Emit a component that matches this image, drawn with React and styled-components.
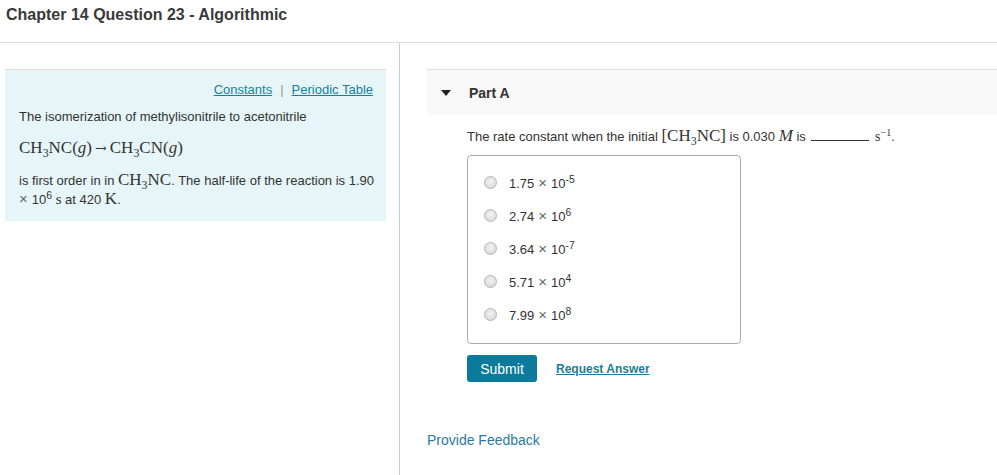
import React from "react";
import styled, { createGlobalStyle } from "styled-components";

const Global = createGlobalStyle`
  html, body { margin: 0; padding: 0; background: #fff; }
  body { font-family: "Liberation Sans", Arial, sans-serif; color: #333; }
`;

const Page = styled.div`
  width: 997px;
  height: 475px;
  display: flex;
  flex-direction: column;
  overflow: hidden;
`;

const Header = styled.header`
  height: 43px;
  flex: none;
  border-bottom: 1px solid #dcdcdc;
  padding: 6px 0 0 6px;
  box-sizing: border-box;
`;

const Title = styled.h1`
  margin: 0;
  font-size: 16px;
  line-height: 18px;
  font-weight: bold;
  color: #3a3a3a;
`;

const Main = styled.div`
  flex: 1;
  display: flex;
`;

const LeftCol = styled.div`
  width: 400px;
  box-sizing: border-box;
  border-right: 1px solid #bdd2e0;
  padding: 26px 13px 0 5px;
`;

const InfoPanel = styled.div`
  background: #e6f5f7;
  border-top: 1px solid #dcdcdc;
  padding: 12px 10px 12px 14px;
  height: 152px;
  box-sizing: border-box;
  font-size: 13px;
  color: #333;
`;

const Links = styled.div`
  display: flex;
  justify-content: flex-end;
  align-items: center;
  gap: 8px;
  line-height: 16px;
  margin-bottom: 10px;
  padding-right: 3px;
`;

const Link = styled.a`
  color: #147fa3;
  text-decoration: underline;
  font-size: ${(p) => p.$size || 13}px;
  font-weight: ${(p) => (p.$bold ? "bold" : "normal")};
  cursor: pointer;
`;

const Sep = styled.span`
  color: #999;
`;

const Para = styled.p`
  margin: 0;
  line-height: 18px;
`;

const Line = styled.span`
  white-space: nowrap;
`;

const Equation = styled.div`
  font-family: "Liberation Serif", "Times New Roman", serif;
  font-size: 17px;
  line-height: 20px;
  margin: 12px 0 13px;
  color: #333;
`;

const Arrow = styled.span`
  font-family: "DejaVu Serif", serif;
  margin: 0 3px;
  font-size: 14px;
`;

const M = styled.span`
  font-family: "Liberation Serif", "Times New Roman", serif;
  font-size: ${(p) => p.$size || 17}px;
  font-style: ${(p) => (p.$italic ? "italic" : "normal")};
`;

const Sub = styled.sub`
  font-size: 0.7em;
  vertical-align: -0.3em;
  line-height: 0;
`;

const Sup = styled.sup`
  font-size: ${(p) => p.$size || 0.72}em;
  vertical-align: 0.5em;
  line-height: 0;
`;

const RightCol = styled.div`
  flex: 1;
  padding: 26px 0 0 27px;
  display: flex;
  flex-direction: column;
`;

const PartHeader = styled.div`
  height: 46px;
  background: #f8f8f8;
  border-top: 1px solid #dcdcdc;
  box-sizing: border-box;
  display: flex;
  align-items: center;
  padding-left: 14px;
  gap: 18px;
`;

const Caret = styled.span`
  width: 0;
  height: 0;
  border-left: 5px solid transparent;
  border-right: 5px solid transparent;
  border-top: 6px solid #222;
  margin-top: 1px;
`;

const PartTitle = styled.span`
  font-weight: bold;
  font-size: 14px;
  color: #333;
`;

const PartBody = styled.div`
  padding-left: 40px;
`;

const Question = styled.p`
  margin: 11px 0 0;
  font-size: 13px;
  line-height: 19px;
  color: #333;
`;

const Blank = styled.span`
  display: inline-block;
  width: 58px;
  border-bottom: 1px solid #333;
  margin: 0 2px 0 2px;
  height: 13px;
  vertical-align: baseline;
`;

const Options = styled.div`
  margin-top: 9px;
  width: 274px;
  height: 189px;
  box-sizing: border-box;
  border: 1px solid #aaa;
  border-radius: 4px;
  padding: 10px 0 0 16px;
  display: flex;
  flex-direction: column;
`;

const Option = styled.label`
  height: 33px;
  display: flex;
  align-items: center;
  gap: 12px;
  font-size: 13px;
  color: #333;
`;

const Radio = styled.span`
  width: 11px;
  height: 11px;
  border-radius: 50%;
  border: 1px solid #b5b5b5;
  background: radial-gradient(circle at 50% 40%, #f4f4f4 0%, #dcdcdc 70%, #cfcfcf 100%);
  flex: none;
`;

const Times = styled.span`
  margin: 0 4px 0 ${(p) => (p.$flush ? 0 : 4)}px;
  font-size: 15px;
  color: #666;
`;

const Actions = styled.div`
  display: flex;
  align-items: center;
  gap: 19px;
  margin-top: 11px;
`;

const Button = styled.button`
  width: 70px;
  height: 27px;
  border: none;
  border-radius: 3px;
  background: #0a7a9d;
  color: #fff;
  font-family: "Liberation Sans", Arial, sans-serif;
  font-size: 14px;
  padding: 0;
`;

const Feedback = styled.a`
  margin-top: 50px;
  font-size: 14px;
  color: #2a7ba0;
  text-decoration: none;
`;

const options = [
  ["1.75", "-5"],
  ["2.74", "6"],
  ["3.64", "-7"],
  ["5.71", "4"],
  ["7.99", "8"],
];

export default function App() {
  return (
    <Page>
      <Global />
      <Header>
        <Title>Chapter 14 Question 23 - Algorithmic</Title>
      </Header>
      <Main>
        <LeftCol>
          <InfoPanel>
            <Links>
              <Link>Constants</Link>
              <Sep>|</Sep>
              <Link>Periodic Table</Link>
            </Links>
            <Para>The isomerization of methylisonitrile to acetonitrile</Para>
            <Equation>
              CH<Sub>3</Sub>NC(<i>g</i>)<Arrow>→</Arrow>CH<Sub>3</Sub>CN(<i>g</i>)
            </Equation>
            <Para>
              <Line>
                is first order in in <M>CH<Sub>3</Sub>NC</M>. The half-life of the reaction is 1.90
              </Line>
              <br />
              <Times $flush>×</Times>10<Sup $size={0.8}>6</Sup> <M $size={15}>s</M> at 420 <M>K</M>.
            </Para>
          </InfoPanel>
        </LeftCol>
        <RightCol>
          <PartHeader>
            <Caret />
            <PartTitle>Part A</PartTitle>
          </PartHeader>
          <PartBody>
            <Question>
              The rate constant when the initial <M>[CH<Sub>3</Sub>NC]</M> is 0.030{" "}
              <M $italic>M</M> is <Blank /> <M $size={14}>s<Sup>−1</Sup></M>.
            </Question>
            <Options>
              {options.map(([v, e]) => (
                <Option key={v}>
                  <Radio />
                  <span>
                    {v}
                    <Times>×</Times>10<Sup $size={0.8}>{e}</Sup>
                  </span>
                </Option>
              ))}
            </Options>
            <Actions>
              <Button>Submit</Button>
              <Link $bold $size={12}>Request Answer</Link>
            </Actions>
          </PartBody>
          <Feedback>Provide Feedback</Feedback>
        </RightCol>
      </Main>
    </Page>
  );
}
